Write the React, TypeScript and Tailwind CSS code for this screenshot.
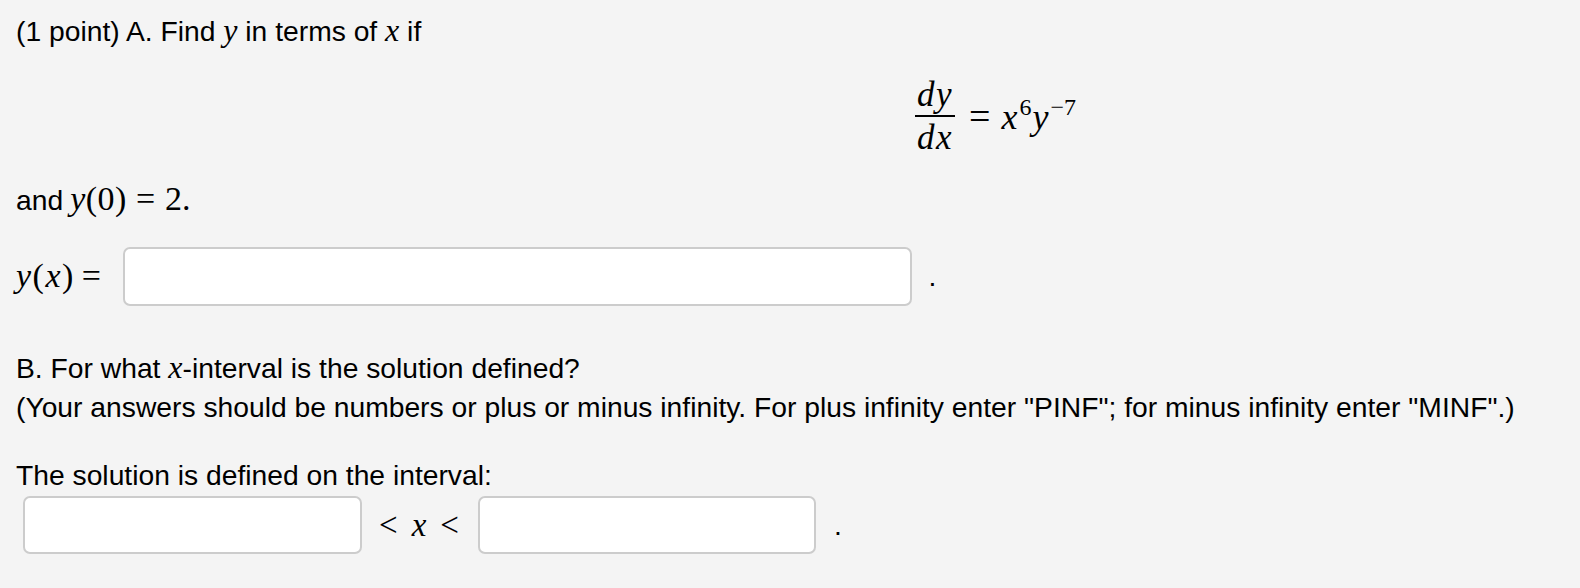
import React from "react";

const sans = { fontFamily: '"Liberation Sans", Arial, sans-serif' };
const serif = { fontFamily: '"Liberation Serif", "Times New Roman", serif' };

function MI({ children, size = "text-[34px]" }: { children: React.ReactNode; size?: string }) {
  return (
    <span className={"italic " + size} style={serif}>
      {children}
    </span>
  );
}

function MR({ children, size = "text-[34px]" }: { children: React.ReactNode; size?: string }) {
  return (
    <span className={size} style={serif}>
      {children}
    </span>
  );
}

const boxCls = "bg-white border-[2px] border-[#cccccc] rounded-[7px]";

export default function App() {
  return (
    <div className="w-[1580px] h-[588px] bg-[#f4f4f4] text-black pl-[16px] pt-[10px] text-[28.25px]" style={sans}>
      <div className="h-[40px] leading-[40px] whitespace-pre">
        <span>(1 point) A. Find </span>
        <MI size="text-[32px]">y</MI>
        <span> in terms of </span>
        <MI size="text-[32px]">x</MI>
        <span> if</span>
      </div>

      <div className="mt-[26px] h-[80px] flex items-center pl-[899px]" style={serif}>
        <div className="flex flex-col items-center w-[40px]">
          <span className="italic text-[35px] leading-[35px] tracking-[1.5px]">dy</span>
          <div className="w-[40px] h-[2px] bg-black my-[3px]"></div>
          <span className="italic text-[35px] leading-[35px] tracking-[1.5px]">dx</span>
        </div>
        <div className="ml-[14px] pt-[5px] flex items-baseline leading-[40px]">
          <span className="text-[38px] mr-[11px]">=</span>
          <span className="italic text-[36px]">x</span>
          <span className="text-[24px] relative -top-[14px] ml-[2px] mr-[1px]">6</span>
          <span className="italic text-[36px]">y</span>
          <span className="text-[24px] relative -top-[14px] ml-[2px]">−7</span>
        </div>
      </div>

      <div className="mt-[23px] h-[40px] leading-[40px] whitespace-pre">
        <span>and</span>
        <span className="ml-[7px] tracking-[0.5px]">
          <MI>y</MI>
          <MR>(0)</MR>
        </span>
        <span className="ml-[9px]"><MR>=</MR></span>
        <span className="ml-[10px]"><MR>2.</MR></span>
      </div>

      <div className="mt-[28px] h-[59px] flex items-center">
        <span className="leading-[40px] whitespace-pre tracking-[1.5px]">
          <MI>y</MI>
          <MR>(</MR>
          <MI>x</MI>
          <MR>)</MR>
          <span className="ml-[7px]"><MR>=</MR></span>
        </span>
        <div className={"ml-[20px] w-[789px] h-[59px] " + boxCls}></div>
        <span className="ml-[17px]">.</span>
      </div>

      <div className="mt-[41px] h-[40px] leading-[40px] whitespace-pre">
        <span>B. For what </span>
        <MI size="text-[32px]">x</MI>
        <span>-interval is the solution defined?</span>
      </div>
      <div className="h-[40px] leading-[40px]">
        <span>(Your answers should be numbers or plus or minus infinity. For plus infinity enter "PINF"; for minus infinity enter "MINF".)</span>
      </div>

      <div className="mt-[28px] h-[40px] leading-[40px]">
        <span>The solution is defined on the interval:</span>
      </div>
      <div className="mt-[1px] h-[58px] flex items-center pl-[7px]">
        <div className={"w-[339px] h-[58px] " + boxCls}></div>
        <span className="ml-[17px] leading-[40px] whitespace-pre">
          <MR size="text-[33px]">&lt;</MR>
          <span className="ml-[14px]"><MI size="text-[33px]">x</MI></span>
          <span className="ml-[14px]"><MR size="text-[33px]">&lt;</MR></span>
        </span>
        <div className={"ml-[19px] w-[338px] h-[58px] " + boxCls}></div>
        <span className="ml-[18px]">.</span>
      </div>
    </div>
  );
}
